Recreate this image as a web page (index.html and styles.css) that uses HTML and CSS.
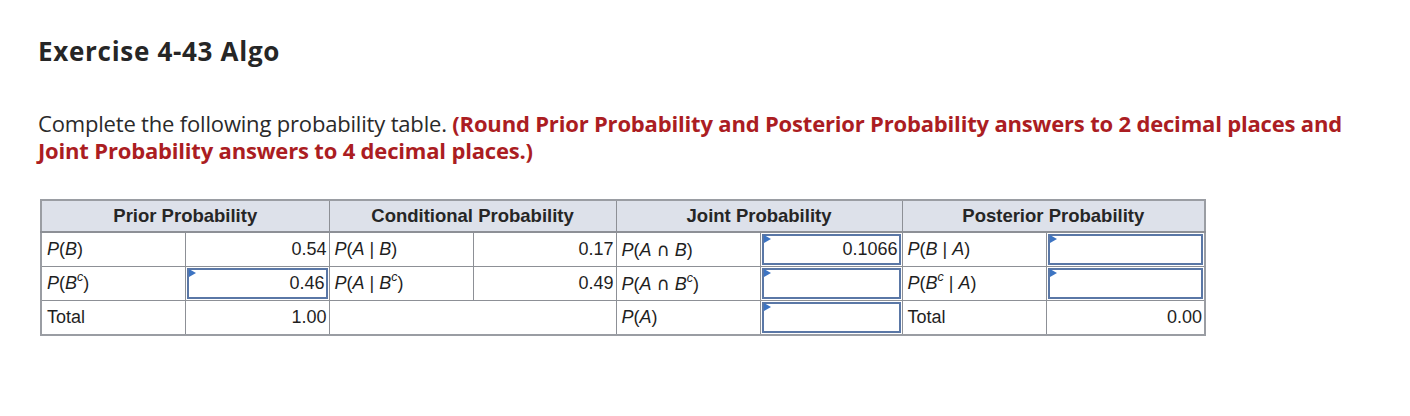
FILE: index.html
```html
<!DOCTYPE html>
<html>
<head>
<meta charset="utf-8">
<link rel="stylesheet" href="styles.css">
</head>
<body>
<main class="page">
  <h1 class="title">Exercise 4-43 Algo</h1>
  <p class="prompt">Complete the following probability table. <strong class="note">(Round Prior Probability and Posterior Probability answers to 2 decimal places and Joint Probability answers to 4 decimal places.)</strong></p>
  <table class="prob">
    <colgroup>
      <col class="c144"><col class="c144"><col class="c144"><col class="c143"><col class="c144"><col class="c142"><col class="c144"><col class="c159">
    </colgroup>
    <thead>
      <tr>
        <th colspan="2">Prior Probability</th>
        <th colspan="2">Conditional Probability</th>
        <th colspan="2">Joint Probability</th>
        <th colspan="2">Posterior Probability</th>
      </tr>
    </thead>
    <tbody>
      <tr>
        <td class="lbl"><i>P</i>(<i>B</i>)</td>
        <td class="num">0.54</td>
        <td class="lbl"><i>P</i>(<i>A</i> | <i>B</i>)</td>
        <td class="num">0.17</td>
        <td class="lbl"><i>P</i>(<i>A</i> <span class="cap">∩</span> <i>B</i>)</td>
        <td class="in"><div class="box">0.1066</div></td>
        <td class="lbl"><i>P</i>(<i>B</i> | <i>A</i>)</td>
        <td class="in"><div class="box"></div></td>
      </tr>
      <tr>
        <td class="lbl"><i>P</i>(<i>B<sup>c</sup></i>)</td>
        <td class="in"><div class="box">0.46</div></td>
        <td class="lbl"><i>P</i>(<i>A</i> | <i>B<sup>c</sup></i>)</td>
        <td class="num">0.49</td>
        <td class="lbl"><i>P</i>(<i>A</i> <span class="cap">∩</span> <i>B<sup>c</sup></i>)</td>
        <td class="in"><div class="box"></div></td>
        <td class="lbl"><i>P</i>(<i>B<sup>c</sup></i> | <i>A</i>)</td>
        <td class="in"><div class="box"></div></td>
      </tr>
      <tr>
        <td class="lbl">Total</td>
        <td class="num">1.00</td>
        <td class="lbl" colspan="2"></td>
        <td class="lbl"><i>P</i>(<i>A</i>)</td>
        <td class="in"><div class="box"></div></td>
        <td class="lbl">Total</td>
        <td class="num">0.00</td>
      </tr>
    </tbody>
  </table>
</main>
</body>
</html>
```
FILE: styles.css
```css
html, body {
  margin: 0;
  padding: 0;
  background: #ffffff;
}
.page {
  padding: 34px 0 0 38px;
  font-family: "Open Sans", Lato, sans-serif;
  color: #2a2a2a;
}
.title {
  margin: 0;
  font-size: 26px;
  font-weight: 700;
  line-height: 34px;
  color: #262626;
  letter-spacing: 0.7px;
}
.prompt {
  margin: 42px 0 0 0;
  font-size: 22px;
  line-height: 27px;
  width: 1330px;
  color: #2a2a2a;
  letter-spacing: -0.18px;
}
.note {
  color: #ab1d22;
  font-weight: 700;
}
.prob {
  margin: 35px 0 0 2px;
  border-collapse: collapse;
  table-layout: fixed;
  width: 1164px;
  font-family: "Liberation Sans", Arial, sans-serif;
  font-size: 18px;
  color: #1f1f1f;
  border: 2px solid #9a9da3;
}
.c144 { width: 144px; }
.c143 { width: 143px; }
.c142 { width: 142px; }
.c159 { width: 159px; }
.prob th {
  background: #dde1ea;
  font-weight: 700;
  font-size: 18.5px;
  height: 32px;
  padding: 0;
  border: 1px solid #8d9096;
  border-bottom: 2px solid #8d9096;
  color: #262626;
  box-sizing: border-box;
}
.prob td {
  height: 33px;
  padding: 0 3px 0 5px;
  border: 1px solid #8d9096;
  white-space: nowrap;
  box-sizing: border-box;
}
.prob td.num {
  text-align: right;
  padding-right: 2px;
}
.prob td.in {
  padding: 1px;
}
.prob sup {
  font-size: 12.5px;
  vertical-align: 8px;
  line-height: 0;
}
.cap {
  font-family: "DejaVu Sans", sans-serif;
  font-size: 18px;
}
.box {
  position: relative;
  box-sizing: border-box;
  height: 31px;
  border: 2px solid #5a77a6;
  text-align: right;
  padding: 0 1px 0 0;
  line-height: 27px;
}
.box::before {
  content: "";
  position: absolute;
  left: 0;
  top: -1px;
  border-left: 7px solid #3d74c2;
  border-top: 4px solid transparent;
  border-bottom: 4px solid transparent;
}
```
